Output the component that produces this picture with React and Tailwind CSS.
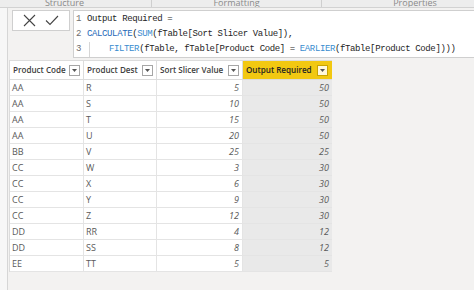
import React from 'react';

// --- DAX formula view with the resulting table ---

const rows = [
  { code: 'AA', dest: 'R', value: 5, output: 50 },
  { code: 'AA', dest: 'S', value: 10, output: 50 },
  { code: 'AA', dest: 'T', value: 15, output: 50 },
  { code: 'AA', dest: 'U', value: 20, output: 50 },
  { code: 'BB', dest: 'V', value: 25, output: 25 },
  { code: 'CC', dest: 'W', value: 3, output: 30 },
  { code: 'CC', dest: 'X', value: 6, output: 30 },
  { code: 'CC', dest: 'Y', value: 9, output: 30 },
  { code: 'CC', dest: 'Z', value: 12, output: 30 },
  { code: 'DD', dest: 'RR', value: 4, output: 12 },
  { code: 'DD', dest: 'SS', value: 8, output: 12 },
  { code: 'EE', dest: 'TT', value: 5, output: 5 },
];

const DropButton = ({ yellow }) => (
  <span
    className={`flex h-[11px] w-[11px] shrink-0 items-center justify-center border ${
      yellow ? 'border-[#c9a400] bg-[#fff8dc]' : 'border-[#a6a6a6] bg-white'
    }`}
  >
    <svg width="5" height="3" viewBox="0 0 5 3">
      <path d="M0 0 L5 0 L2.5 3 Z" fill="#555" />
    </svg>
  </span>
);

const HeaderCell = ({ label, width, yellow }) => (
  <div
    className={`flex h-[18px] items-center justify-between border-r pl-[3px] pr-[3px] ${width} ${
      yellow ? 'bg-[#f2c811] border-[#f2c811] text-[#252423]' : 'bg-white border-[#dcdcdc] text-[#404040]'
    }`}
  >
    <span className="whitespace-nowrap pt-[1px] font-semibold text-[8.1px]">{label}</span>
    <DropButton yellow={yellow} />
  </div>
);

const Ribbon = () => (
  <div className="flex h-[8px] overflow-hidden border-b border-[#d2d2d2] bg-[#ededed] text-[9px] leading-[10px] text-[#8a8a8a]">
    <div className="flex w-[152px] items-end justify-center border-r border-[#cfcfcf] pr-[22px]">
      <span className="-mb-[1px]">Structure</span>
    </div>
    <div className="flex w-[170px] items-end justify-center border-r border-[#cfcfcf]">
      <span className="-mb-[1px]">Formatting</span>
    </div>
    <div className="flex flex-1 items-end justify-center pl-[34px]">
      <span className="-mb-[1px]">Properties</span>
    </div>
  </div>
);

const FormulaBar = () => (
  <div className="flex pt-[2px]">
    <div className="ml-[3px] flex h-[21px] w-[58px] items-center justify-around border border-[#cfcfcf] bg-white px-[6px]">
      <svg width="13" height="13" viewBox="0 0 13 13">
        <path d="M1 1 L12 12 M12 1 L1 12" stroke="#444" strokeWidth="1.1" fill="none" />
      </svg>
      <svg width="14" height="11" viewBox="0 0 14 11">
        <path d="M1 5.5 L5 9.5 L13 1" stroke="#444" strokeWidth="1.1" fill="none" />
      </svg>
    </div>
    <div className="ml-[3px] h-[48px] flex-1 border border-r-0 border-[#cfcfcf] bg-white pt-[1px] font-['Liberation_Mono',monospace] text-[9px] leading-[15px] tracking-[-0.38px] text-[#1e1e1e] whitespace-pre">
      <div className="flex">
        <span className="w-[13px] pl-[2px] text-[#6e6e6e]">1</span>
        <span>Output Required =</span>
      </div>
      <div className="flex">
        <span className="w-[13px] pl-[2px] text-[#6e6e6e]">2</span>
        <span>
          <span className="text-[#2467b8]">CALCULATE</span>(<span className="text-[#3a8ccf]">SUM</span>(fTable[Sort Slicer Value]),
        </span>
      </div>
      <div className="flex">
        <span className="w-[13px] pl-[2px] text-[#6e6e6e]">3</span>
        <span className="ml-[2px] mr-[19px] w-px self-stretch bg-[#d6d6d6]" />
        <span>
          <span className="text-[#3a8ccf]">FILTER</span>(fTable, fTable[Product Code] = <span className="text-[#3a8ccf]">EARLIER</span>(fTable[Product Code])))
        </span>
      </div>
    </div>
  </div>
);

const DataTable = () => (
  <div className="mt-[2px] w-[323px] border-l border-[#dcdcdc] font-['Open_Sans',sans-serif] text-[9px]">
    <div className="flex border-y border-[#dcdcdc]">
      <HeaderCell label="Product Code" width="w-[74px]" />
      <HeaderCell label="Product Dest" width="w-[73px]" />
      <HeaderCell label="Sort Slicer Value" width="w-[86px]" />
      <HeaderCell label="Output Required" width="w-[89px]" yellow />
    </div>
    {rows.map((row, i) => (
      <div key={i} className="flex h-[16px] border-b border-[#e4e4e4] leading-[15px] text-[#5a5a5a]">
        <div className="w-[74px] border-r border-[#e4e4e4] bg-white pl-[2px]">{row.code}</div>
        <div className="w-[73px] border-r border-[#e4e4e4] bg-white pl-[2px]">{row.dest}</div>
        <div className="w-[86px] border-r border-[#e4e4e4] bg-white pr-[3px] text-right italic">{row.value}</div>
        <div className="w-[89px] bg-[#e9e9e9] pr-[3px] text-right italic">{row.output}</div>
      </div>
    ))}
  </div>
);

const App = () => {
  return (
    <div className="h-[290px] w-[474px] overflow-hidden bg-[#f3f2f1] font-['Open_Sans',sans-serif]">
      <Ribbon />
      <div className="flex h-[282px]">
        <div className="w-[8px] shrink-0 border-r border-[#d6d6d6] bg-[#f7f7f7]" />
        <div className="flex-1 pl-[1px]">
          <FormulaBar />
          <DataTable />
        </div>
      </div>
    </div>
  );
};

export default App;
